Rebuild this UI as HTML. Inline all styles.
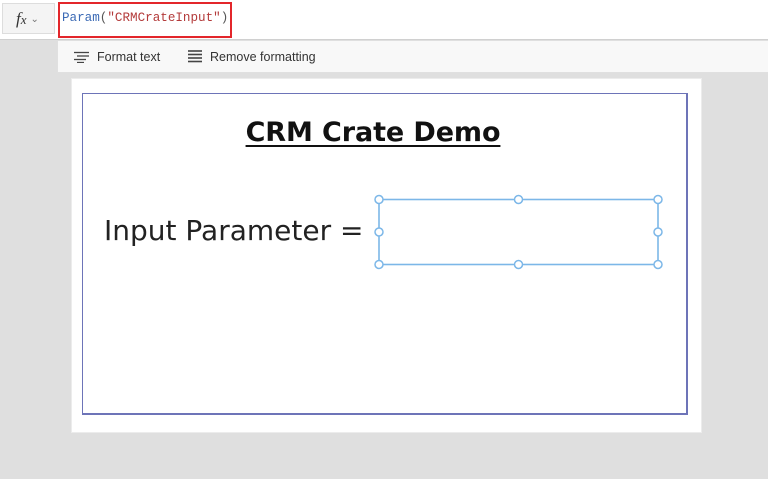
<!DOCTYPE html>
<html><head><meta charset="utf-8"><style>
*{margin:0;padding:0;box-sizing:border-box}
body{width:768px;height:479px;overflow:hidden;background:#dfdfdf;font-family:"Liberation Sans",sans-serif;position:relative}
.top{position:absolute;left:0;top:0;width:768px;height:40px;background:#fff;border-bottom:1px solid #d0d0d0}
.fx{position:absolute;left:2px;top:3px;width:53px;height:31px;background:#f4f4f4;border:1px solid #ddd;font-family:"Liberation Serif",serif;font-style:italic;font-size:17px;color:#333;padding:5px 0 0 13px}
.fx span{font-style:normal;font-family:"Liberation Sans";font-size:10px;color:#777;margin-left:4px;vertical-align:2px}
.red{position:absolute;left:58px;top:2px;width:174px;height:36px;border:2px solid #e3262b}
.code{position:absolute;left:62px;top:11px;font-family:"Liberation Mono",monospace;font-size:12.6px;color:#555}
.tb{position:absolute;left:57px;top:41px;width:711px;height:32px;background:#f8f8f8;border-bottom:1px solid #e0e0e0;border-left:1px solid #e0e0e0;font-size:12.5px;color:#333}
.tb div{position:absolute;top:9px}
.canvas{position:absolute;left:71px;top:78px;width:631px;height:355px;background:#fff;border:1px solid #ececec}
.inner{position:absolute;left:82px;top:93px;width:606px;height:322px;border:2px solid #6d74b8;border-top-width:1px;border-left-width:1px}
.title{position:absolute;left:0;width:746px;top:117px;text-align:center;font-family:"DejaVu Sans",sans-serif;font-weight:bold;font-size:27px;letter-spacing:-0.1px;text-decoration:underline;text-decoration-thickness:2px;text-underline-offset:4px;color:#111}
.lbl{position:absolute;left:104px;top:214px;font-family:"DejaVu Sans",sans-serif;font-size:28px;color:#222;letter-spacing:0px}
</style></head><body>
<div class="top"></div>
<div class="fx">f<i style="font-size:13px">x</i><span>&#8964;</span></div>
<div class="code"><span style="color:#3b6ab5">Param</span>(<span style="color:#b33a3a">"CRMCrateInput"</span>)</div>
<div class="red"></div>
<div class="tb">
<svg style="position:absolute;left:16px;top:10px" width="16" height="12"><g stroke="#444" stroke-width="1.3"><line x1="0" y1="1.5" x2="15" y2="1.5"/><line x1="3" y1="5" x2="15" y2="5"/><line x1="0" y1="8.5" x2="12" y2="8.5"/><line x1="3" y1="11.5" x2="10" y2="11.5"/></g></svg>
<div style="left:39px">Format text</div>
<svg style="position:absolute;left:130px;top:9px" width="14" height="13"><g stroke="#444" stroke-width="1.6"><line x1="0" y1="1" x2="14" y2="1"/><line x1="0" y1="4.5" x2="14" y2="4.5"/><line x1="0" y1="8" x2="14" y2="8"/><line x1="0" y1="11.5" x2="14" y2="11.5"/></g></svg>
<div style="left:152px">Remove formatting</div>
</div>
<div class="canvas"></div>
<div class="inner"></div>
<div class="title">CRM Crate Demo</div>
<div class="lbl">Input Parameter =</div>
<svg style="position:absolute;left:0;top:0" width="768" height="479">
<rect x="379" y="199.5" width="279" height="65" fill="none" stroke="#7cb7e8" stroke-width="1.6"/>
<g fill="#fff" stroke="#7cb7e8" stroke-width="1.5">
<circle cx="379" cy="199.5" r="4"/><circle cx="518.5" cy="199.5" r="4"/><circle cx="658" cy="199.5" r="4"/>
<circle cx="379" cy="232" r="4"/><circle cx="658" cy="232" r="4"/>
<circle cx="379" cy="264.5" r="4"/><circle cx="518.5" cy="264.5" r="4"/><circle cx="658" cy="264.5" r="4"/>
</g></svg>
</body></html>
